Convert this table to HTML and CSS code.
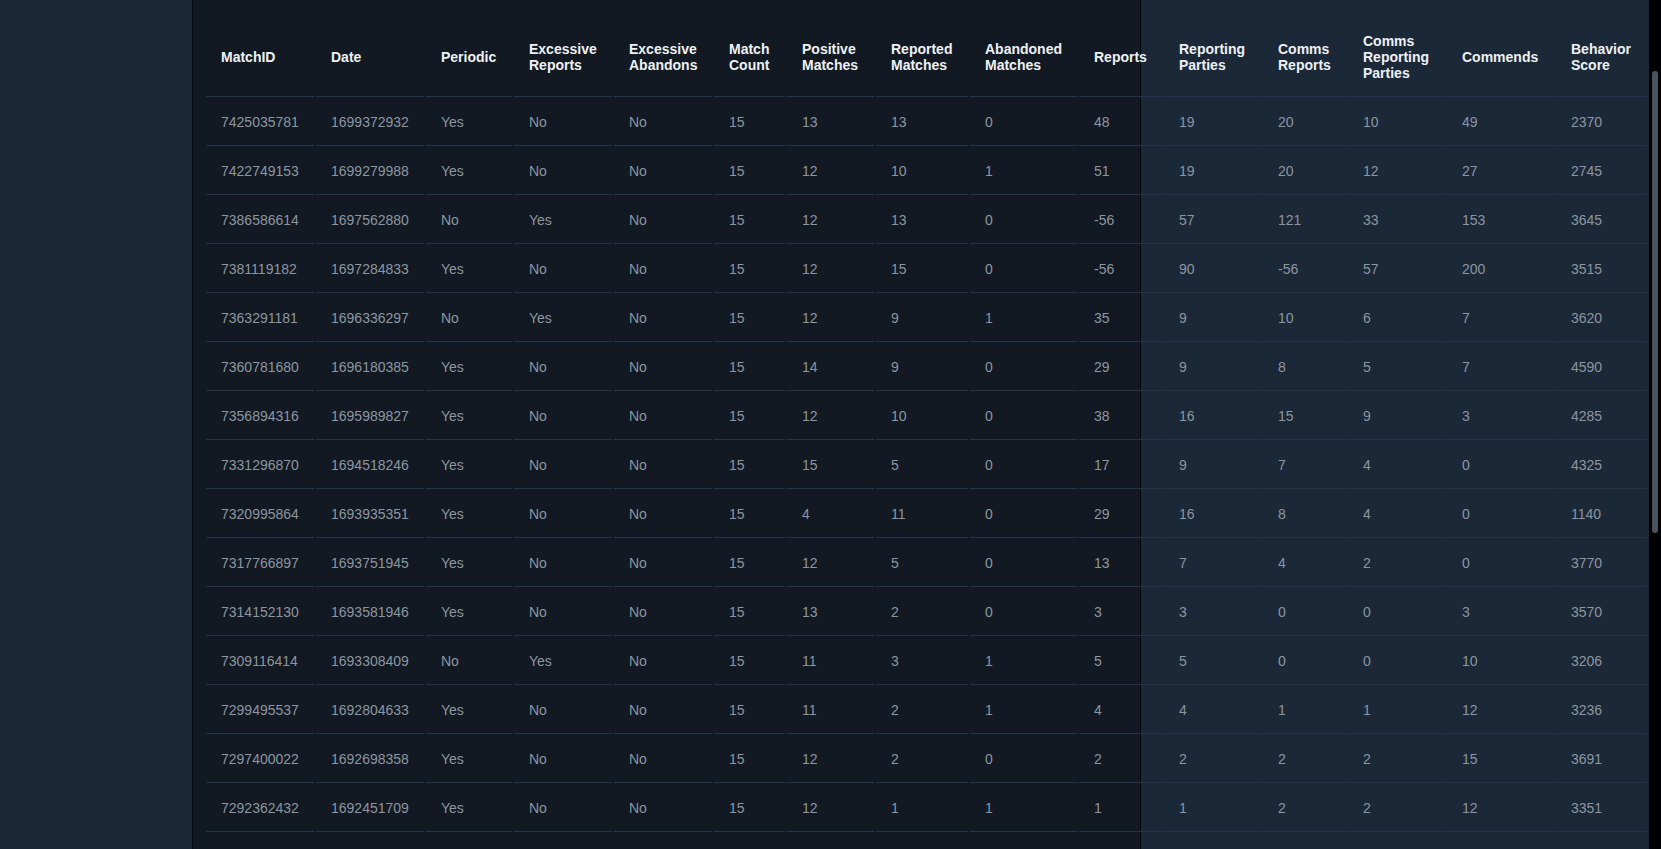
FILE: index.html
```html
<!DOCTYPE html>
<html lang="en">
<head>
<meta charset="utf-8">
<title>Match History</title>
<link rel="stylesheet" href="styles.css">
</head>
<body>
<div class="page">
  <aside class="sidebar"></aside>
  <main class="main">
    <table class="matches">
      <colgroup>
        <col class="c1"><col class="c2"><col class="c3"><col class="c4"><col class="c5">
        <col class="c6"><col class="c7"><col class="c8"><col class="c9"><col class="c10">
        <col class="c11"><col class="c12"><col class="c13"><col class="c14"><col class="c15">
      </colgroup>
      <thead>
        <tr>
          <th>MatchID</th><th>Date</th><th>Periodic</th><th>Excessive Reports</th><th>Excessive Abandons</th>
          <th>Match Count</th><th>Positive Matches</th><th>Reported Matches</th><th>Abandoned Matches</th><th>Reports</th>
          <th>Reporting Parties</th><th>Comms Reports</th><th>Comms Reporting Parties</th><th>Commends</th><th>Behavior Score</th>
        </tr>
      </thead>
      <tbody>
        <tr><td>7425035781</td><td>1699372932</td><td>Yes</td><td>No</td><td>No</td><td>15</td><td>13</td><td>13</td><td>0</td><td>48</td><td>19</td><td>20</td><td>10</td><td>49</td><td>2370</td></tr>
        <tr><td>7422749153</td><td>1699279988</td><td>Yes</td><td>No</td><td>No</td><td>15</td><td>12</td><td>10</td><td>1</td><td>51</td><td>19</td><td>20</td><td>12</td><td>27</td><td>2745</td></tr>
        <tr><td>7386586614</td><td>1697562880</td><td>No</td><td>Yes</td><td>No</td><td>15</td><td>12</td><td>13</td><td>0</td><td>-56</td><td>57</td><td>121</td><td>33</td><td>153</td><td>3645</td></tr>
        <tr><td>7381119182</td><td>1697284833</td><td>Yes</td><td>No</td><td>No</td><td>15</td><td>12</td><td>15</td><td>0</td><td>-56</td><td>90</td><td>-56</td><td>57</td><td>200</td><td>3515</td></tr>
        <tr><td>7363291181</td><td>1696336297</td><td>No</td><td>Yes</td><td>No</td><td>15</td><td>12</td><td>9</td><td>1</td><td>35</td><td>9</td><td>10</td><td>6</td><td>7</td><td>3620</td></tr>
        <tr><td>7360781680</td><td>1696180385</td><td>Yes</td><td>No</td><td>No</td><td>15</td><td>14</td><td>9</td><td>0</td><td>29</td><td>9</td><td>8</td><td>5</td><td>7</td><td>4590</td></tr>
        <tr><td>7356894316</td><td>1695989827</td><td>Yes</td><td>No</td><td>No</td><td>15</td><td>12</td><td>10</td><td>0</td><td>38</td><td>16</td><td>15</td><td>9</td><td>3</td><td>4285</td></tr>
        <tr><td>7331296870</td><td>1694518246</td><td>Yes</td><td>No</td><td>No</td><td>15</td><td>15</td><td>5</td><td>0</td><td>17</td><td>9</td><td>7</td><td>4</td><td>0</td><td>4325</td></tr>
        <tr><td>7320995864</td><td>1693935351</td><td>Yes</td><td>No</td><td>No</td><td>15</td><td>4</td><td>11</td><td>0</td><td>29</td><td>16</td><td>8</td><td>4</td><td>0</td><td>1140</td></tr>
        <tr><td>7317766897</td><td>1693751945</td><td>Yes</td><td>No</td><td>No</td><td>15</td><td>12</td><td>5</td><td>0</td><td>13</td><td>7</td><td>4</td><td>2</td><td>0</td><td>3770</td></tr>
        <tr><td>7314152130</td><td>1693581946</td><td>Yes</td><td>No</td><td>No</td><td>15</td><td>13</td><td>2</td><td>0</td><td>3</td><td>3</td><td>0</td><td>0</td><td>3</td><td>3570</td></tr>
        <tr><td>7309116414</td><td>1693308409</td><td>No</td><td>Yes</td><td>No</td><td>15</td><td>11</td><td>3</td><td>1</td><td>5</td><td>5</td><td>0</td><td>0</td><td>10</td><td>3206</td></tr>
        <tr><td>7299495537</td><td>1692804633</td><td>Yes</td><td>No</td><td>No</td><td>15</td><td>11</td><td>2</td><td>1</td><td>4</td><td>4</td><td>1</td><td>1</td><td>12</td><td>3236</td></tr>
        <tr><td>7297400022</td><td>1692698358</td><td>Yes</td><td>No</td><td>No</td><td>15</td><td>12</td><td>2</td><td>0</td><td>2</td><td>2</td><td>2</td><td>2</td><td>15</td><td>3691</td></tr>
        <tr><td>7292362432</td><td>1692451709</td><td>Yes</td><td>No</td><td>No</td><td>15</td><td>12</td><td>1</td><td>1</td><td>1</td><td>1</td><td>2</td><td>2</td><td>12</td><td>3351</td></tr>
      </tbody>
    </table>
  </main>
</div>
<div class="scrollbar" aria-hidden="true"><div class="scrollbar-thumb"></div></div>
</body>
</html>
```

FILE: styles.css
```css
html {
  background: #1b2838;
}
body {
  margin: 0;
  background: #1b2838;
  font-family: "Liberation Sans", Arial, sans-serif;
  font-size: 14px;
  line-height: 16px;
}
.page {
  display: flex;
  align-items: flex-start;
}
.sidebar {
  flex: 0 0 192px;
}
.main {
  flex: 0 0 auto;
  width: 936px;
  min-height: 900px;
  background: #121922;
  border-left: 1px solid #05080b;
  border-right: 1px solid #05080b;
  padding: 16px 0 40px 11px;
}
.matches {
  table-layout: fixed;
  width: 1445px;
  border-collapse: separate;
  border-spacing: 2px;
}
.matches th,
.matches td {
  padding: 15px;
  text-align: left;
  vertical-align: middle;
  border-bottom: 1px solid #243347;
}
.matches th {
  color: #eef1f4;
  font-weight: bold;
}
.matches td {
  color: #8c96a0;
  font-weight: normal;
}
.c1 { width: 108px; }
.c2 { width: 108px; }
.c3 { width: 86px; }
.c4 { width: 98px; }
.c5 { width: 98px; }
.c6 { width: 71px; }
.c7 { width: 87px; }
.c8 { width: 92px; }
.c9 { width: 107px; }
.c10 { width: 83px; }
.c11 { width: 97px; }
.c12 { width: 83px; }
.c13 { width: 97px; }
.c14 { width: 107px; }
.c15 { width: 91px; }

/* page scrollbar overlay */
.scrollbar {
  position: fixed;
  top: 0;
  right: 0;
  bottom: 0;
  width: 12px;
  background: #000;
  display: flex;
  flex-direction: column;
  align-items: center;
}
.scrollbar-thumb {
  margin-top: 71px;
  width: 6px;
  height: 462px;
  border-radius: 3px;
  background: #4b5361;
}
```
